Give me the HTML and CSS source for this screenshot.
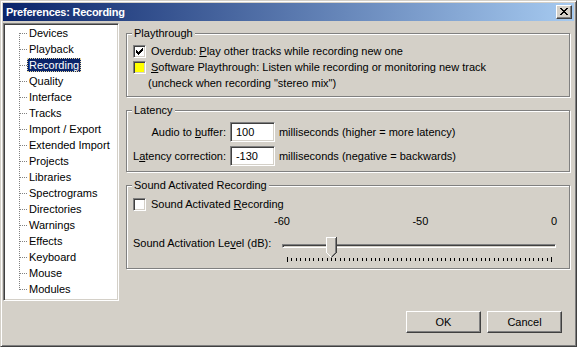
FILE: index.html
```html
<!DOCTYPE html>
<html>
<head>
<meta charset="utf-8">
<title>Preferences: Recording</title>
<link rel="stylesheet" href="styles.css">
</head>
<body>
<div class="window">
  <div class="titlebar">
    <span class="title">Preferences: Recording</span>
    <span class="close btn3d"><svg width="8" height="7" viewBox="0 0 8 7"><path d="M0 0h2v1H0zM6 0h2v1H6zM1 1h2v1H1zM5 1h2v1H5zM2 2h4v1H2zM3 3h2v1H3zM2 4h4v1H2zM1 5h2v1H1zM5 5h2v1H5zM0 6h2v1H0zM6 6h2v1H6z" fill="#000"/></svg></span>
  </div>
  <div class="main">
    <ul class="tree">
      <li><span class="label">Devices</span></li>
      <li><span class="label">Playback</span></li>
      <li class="selected"><span class="label">Recording</span></li>
      <li><span class="label">Quality</span></li>
      <li><span class="label">Interface</span></li>
      <li><span class="label">Tracks</span></li>
      <li><span class="label">Import / Export</span></li>
      <li><span class="label">Extended Import</span></li>
      <li><span class="label">Projects</span></li>
      <li><span class="label">Libraries</span></li>
      <li><span class="label">Spectrograms</span></li>
      <li><span class="label">Directories</span></li>
      <li><span class="label">Warnings</span></li>
      <li><span class="label">Effects</span></li>
      <li><span class="label">Keyboard</span></li>
      <li><span class="label">Mouse</span></li>
      <li><span class="label">Modules</span></li>
    </ul>
    <div class="panel">
      <div class="group">
        <div class="legend">Playthrough</div>
        <div class="rows rows-play">
          <div class="check-row">
            <span class="box"><svg width="9" height="9" viewBox="0 0 9 9"><path d="M1 3h1v3H1zM2 4h1v3H2zM3 5h1v3H3zM4 4h1v3H4zM5 3h1v3H5zM6 2h1v3H6zM7 1h1v3H7z" fill="#000"/></svg></span>
            <span>Overdub: <u>P</u>lay other tracks while recording new one</span>
          </div>
          <div class="check-row">
            <span class="box yellow"></span>
            <span><u>S</u>oftware Playthrough: Listen while recording or monitoring new track</span>
          </div>
          <div class="note">(uncheck when recording "stereo mix")</div>
        </div>
      </div>
      <div class="group">
        <div class="legend">Latency</div>
        <div class="latency">
          <span class="lbl">Audio to <u>b</u>uffer:</span>
          <input class="field" type="text" value="100">
          <span>milliseconds (higher = more latency)</span>
          <span class="lbl">L<u>a</u>tency correction:</span>
          <input class="field" type="text" value="-130">
          <span>milliseconds (negative = backwards)</span>
        </div>
      </div>
      <div class="group">
        <div class="legend">Sound Activated Recording</div>
        <div class="rows rows-sound">
          <div class="check-row">
            <span class="box"></span>
            <span>Sound Activated <u>R</u>ecording</span>
          </div>
          <div class="scale-labels">
            <span>-60</span>
            <span>-50</span>
            <span>0</span>
          </div>
          <div class="slider-row">
            <span class="slider-label">Sound Activation Le<u>v</u>el (dB):</span>
            <div class="slider">
              <div class="track"></div>
              <svg class="thumb" width="11" height="21" viewBox="0 0 11 21">
                <path d="M1 1H9V15L5 19L1 15Z" fill="#D4D0C8"/>
                <path d="M0.5 15.5V0.5H9.5" fill="none" stroke="#fff" shape-rendering="crispEdges"/>
                <path d="M0.5 15.5L5 20" fill="none" stroke="#fff"/>
                <path d="M9.5 1V15.5" fill="none" stroke="#808080" shape-rendering="crispEdges"/>
                <path d="M9.5 15.5L5.5 19.5" fill="none" stroke="#808080"/>
                <path d="M10.5 0V15.5" fill="none" stroke="#404040" shape-rendering="crispEdges"/>
                <path d="M10.5 15.5L5.5 20.5" fill="none" stroke="#404040"/>
              </svg>
              <svg class="ticks" width="275" height="6" viewBox="0 0 275 6">
                <path d="M5.5 0v5M269.5 0v5" stroke="#000" shape-rendering="crispEdges"/>
                <path d="M9.5 1v3M14.5 1v3M18.5 1v3M23.5 1v3M27.5 1v3M31.5 1v3M36.5 1v3M40.5 1v3M45.5 1v3M49.5 1v3M53.5 1v3M58.5 1v3M62.5 1v3M67.5 1v3M71.5 1v3M75.5 1v3M80.5 1v3M84.5 1v3M89.5 1v3M93.5 1v3M97.5 1v3M102.5 1v3M106.5 1v3M111.5 1v3M115.5 1v3M119.5 1v3M124.5 1v3M128.5 1v3M133.5 1v3M137.5 1v3M141.5 1v3M146.5 1v3M150.5 1v3M155.5 1v3M159.5 1v3M163.5 1v3M168.5 1v3M172.5 1v3M177.5 1v3M181.5 1v3M185.5 1v3M190.5 1v3M194.5 1v3M199.5 1v3M203.5 1v3M207.5 1v3M212.5 1v3M216.5 1v3M221.5 1v3M225.5 1v3M229.5 1v3M234.5 1v3M238.5 1v3M243.5 1v3M247.5 1v3M251.5 1v3M256.5 1v3M260.5 1v3M265.5 1v3" stroke="#000" shape-rendering="crispEdges"/>
              </svg>
            </div>
          </div>
        </div>
      </div>
    </div>
  </div>
  <div class="buttons">
    <button class="btn" type="button">OK</button>
    <button class="btn" type="button">Cancel</button>
  </div>
</div>
</body>
</html>
```
FILE: styles.css
```css
* {
  box-sizing: border-box;
}

html,
body {
  margin: 0;
  padding: 0;
  background: #D4D0C8;
}

body {
  font-family: "Liberation Sans", Arial, sans-serif;
  font-size: 11px;
  color: #000;
}

.window {
  width: 577px;
  height: 347px;
  border: 1px solid;
  border-color: #D4D0C8 #404040 #404040 #D4D0C8;
  box-shadow: inset 1px 1px #fff, inset -1px -1px #808080;
  padding: 2px;
  display: flex;
  flex-direction: column;
}

.titlebar {
  height: 18px;
  flex: none;
  display: flex;
  align-items: center;
  justify-content: space-between;
  padding: 0 2px 0 3px;
  background: linear-gradient(to right, #0A246A, #A6CAF0);
  color: #fff;
  font-weight: bold;
  font-size: 11px;
  margin-bottom: 2px;
}

.title {
  letter-spacing: -0.25px;
}

.btn3d {
  background: #D4D0C8;
  border: 1px solid;
  border-color: #fff #404040 #404040 #fff;
  box-shadow: inset -1px -1px #808080;
}

.close {
  width: 16px;
  height: 14px;
  display: flex;
  align-items: center;
  justify-content: center;
  padding-bottom: 1px;
}

.close svg {
  display: block;
}

.main {
  display: flex;
  gap: 7px;
  height: 278px;
  flex: none;
}

/* tree */
.tree {
  width: 116px;
  height: 278px;
  margin: 0;
  padding: 1px;
  list-style: none;
  background: #fff;
  border: 1px solid;
  border-color: #808080 #fff #fff #808080;
  box-shadow: inset 1px 1px #404040, inset -1px -1px #D4D0C8;
  flex: none;
}

.tree li {
  height: 16px;
  display: flex;
  align-items: center;
  white-space: nowrap;
  background-image: linear-gradient(to bottom, #808080 1px, transparent 1px);
  background-size: 1px 2px;
  background-repeat: repeat-y;
  background-position: 14px 0;
}

.tree li:first-child {
  background-image: linear-gradient(#fff 8px, transparent 8px), linear-gradient(to bottom, #808080 1px, transparent 1px);
  background-size: 100% 100%, 1px 2px;
  background-repeat: no-repeat, repeat-y;
  background-position: 0 0, 14px 0;
}

.tree li:last-child {
  background-image: linear-gradient(transparent 9px, #fff 9px), linear-gradient(to bottom, #808080 1px, transparent 1px);
  background-size: 100% 100%, 1px 2px;
  background-repeat: no-repeat, repeat-y;
  background-position: 0 0, 14px 0;
}

.tree li::before {
  content: "";
  display: block;
  width: 7px;
  height: 1px;
  margin-left: 15px;
  background-image: linear-gradient(to right, #808080 1px, transparent 1px);
  background-size: 2px 1px;
}

.tree .label {
  display: block;
  line-height: 12px;
  padding: 0 1px;
  border: 1px solid transparent;
}

.tree .selected .label {
  background: #0A246A;
  color: #fff;
  border: 1px dotted #E8D9A0;
}

/* right panel */
.panel {
  width: 444px;
  padding-top: 10px;
  display: flex;
  flex-direction: column;
  gap: 13px;
}

.group {
  border: 1px solid #808080;
  box-shadow: 1px 1px 0 #fff, inset 1px 1px 0 #fff;
  padding: 0 12px 0 6px;
}

.legend {
  width: max-content;
  margin: -7px 0 0 -1px;
  padding: 0 2px;
  line-height: 13px;
  background: #D4D0C8;
}

.rows-play {
  padding: 3px 0 5px;
}

.check-row {
  height: 16px;
  display: flex;
  align-items: center;
  gap: 5px;
  white-space: nowrap;
}

.box {
  width: 13px;
  height: 13px;
  flex: none;
  display: flex;
  align-items: center;
  justify-content: center;
  background: #fff;
  border: 1px solid;
  border-color: #808080 #fff #fff #808080;
  box-shadow: inset 1px 1px #404040, inset -1px -1px #D4D0C8;
}

.box svg {
  display: block;
}

.box.yellow {
  background: #FFFF00;
}

.note {
  height: 16px;
  line-height: 16px;
  padding-left: 15px;
}

/* latency */
.latency {
  display: grid;
  grid-template-columns: auto 45px auto;
  column-gap: 4px;
  row-gap: 4px;
  align-items: center;
  justify-content: start;
  padding: 5px 0;
}

.latency .lbl {
  justify-self: end;
  white-space: nowrap;
}

.field {
  width: 45px;
  height: 20px;
  margin: 0;
  padding: 0 0 0 5px;
  font: inherit;
  color: #000;
  background: #fff;
  border: 1px solid;
  border-color: #808080 #fff #fff #808080;
  box-shadow: inset 1px 1px #404040, inset -1px -1px #D4D0C8;
  outline: none;
}

/* sound activated */
.rows-sound {
  padding: 4px 0 5px;
}

.scale-labels {
  margin: 2px 0 0 141px;
  line-height: 14px;
  display: flex;
  justify-content: space-between;
}

.slider-row {
  margin-top: 8px;
  display: flex;
  align-items: flex-start;
}

.slider-label {
  line-height: 14px;
  white-space: nowrap;
}

.slider {
  margin-left: auto;
  width: 275px;
  height: 27px;
  position: relative;
}

.track {
  margin: 8px 1px 0 0;
  height: 4px;
  border: 1px solid;
  border-color: #808080 #fff #fff #808080;
  box-shadow: inset 1px 1px #404040;
}

.thumb {
  position: absolute;
  left: 44px;
  top: 1px;
  display: block;
}

.ticks {
  display: block;
  margin-top: 9px;
}

/* buttons */
.buttons {
  margin-top: 10px;
  display: flex;
  justify-content: flex-end;
  gap: 6px;
  padding-right: 12px;
}

.btn {
  width: 75px;
  height: 22px;
  margin: 0;
  padding: 0;
  font: inherit;
  color: #000;
  background: #D4D0C8;
  border: 1px solid;
  border-color: #fff #404040 #404040 #fff;
  box-shadow: inset -1px -1px #808080;
}
```
